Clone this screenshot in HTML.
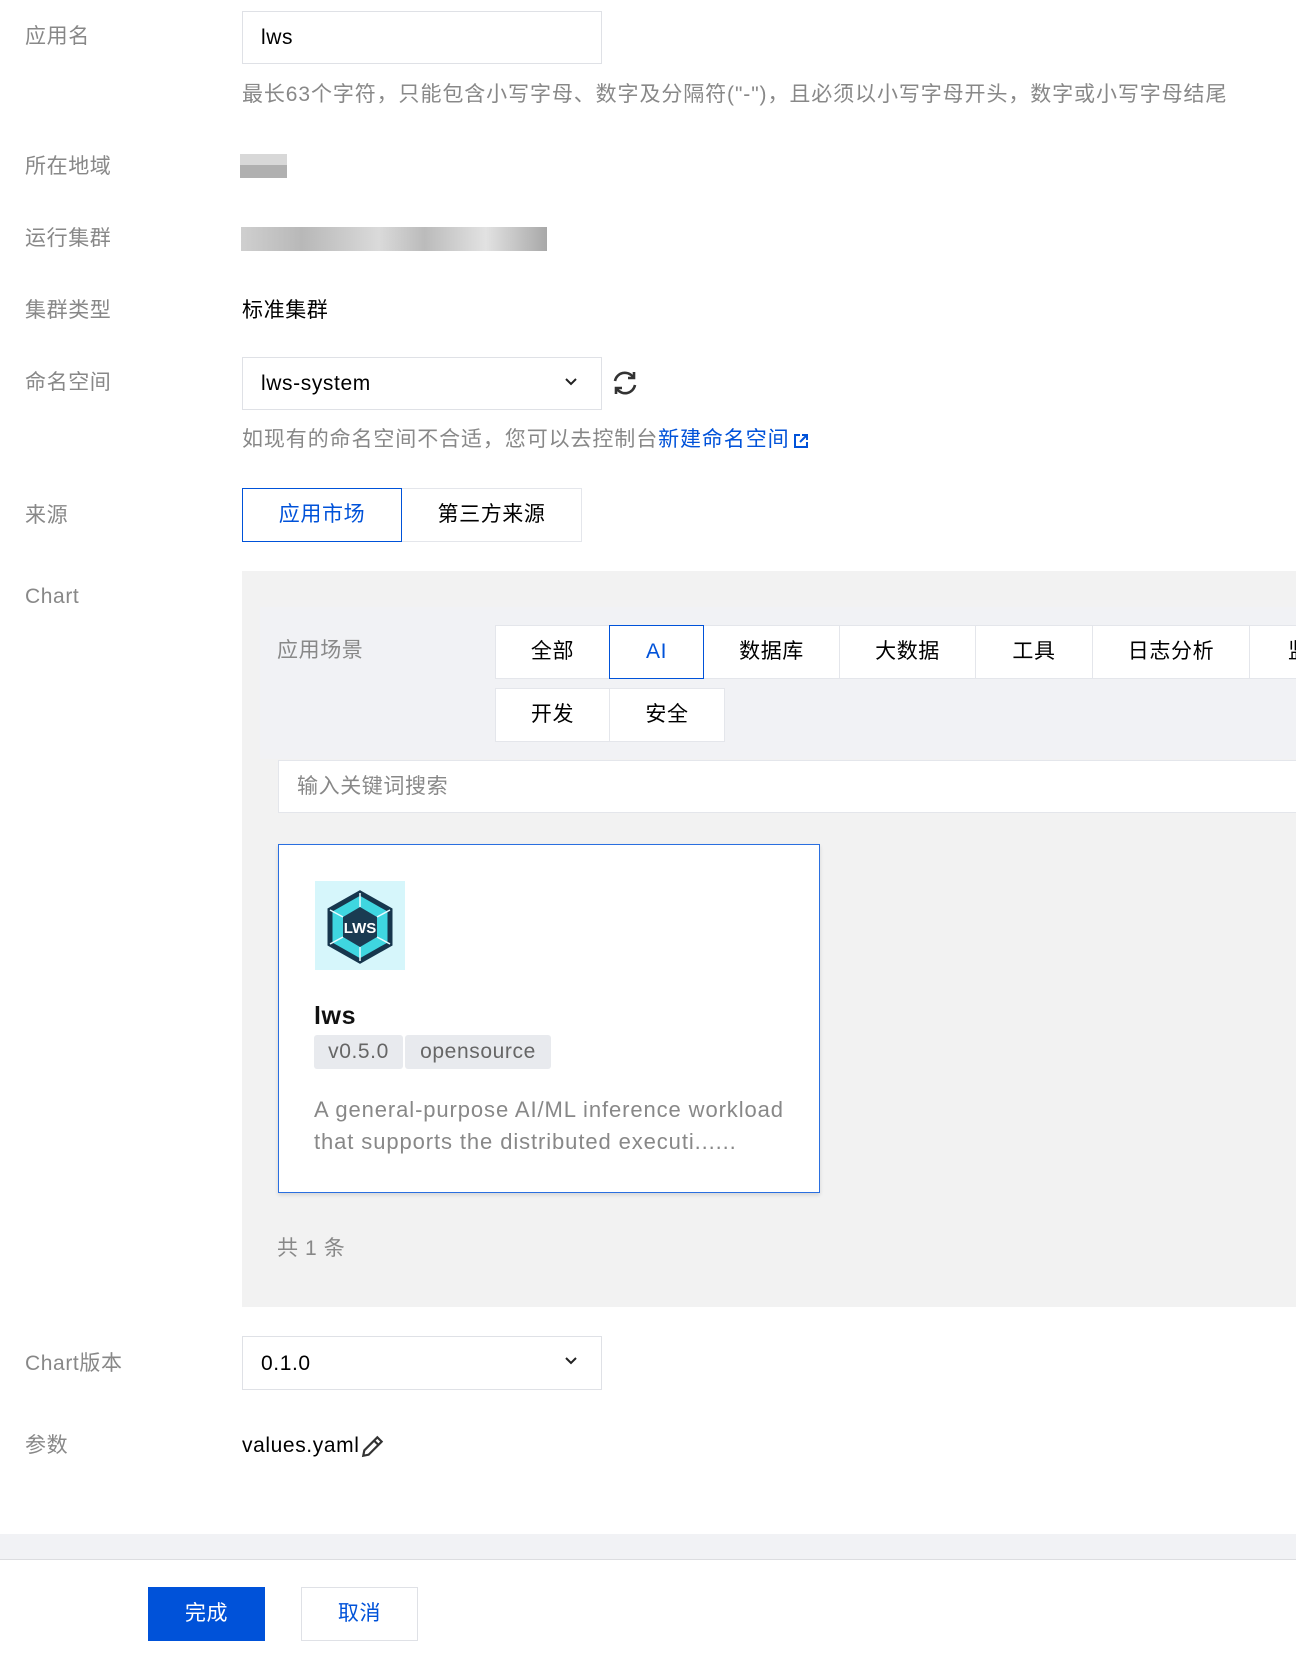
<!DOCTYPE html>
<html><head><meta charset="utf-8"><style>
*{box-sizing:border-box;margin:0;padding:0}
body{width:1296px;height:1660px;background:#fff;font-family:"Liberation Sans","Noto Sans CJK SC",sans-serif;font-size:21px;letter-spacing:0.6px;color:#000;position:relative;overflow:hidden}
.a{position:absolute;white-space:nowrap}
.lbl{color:#888;left:25px;line-height:28px}
.box{position:absolute;border:1px solid #dfe1e6;background:#fff}
.tab{position:absolute;background:#fff;border:1px solid #e4e6eb;text-align:center;line-height:52px}
</style></head><body>
<div class="a lbl" style="top:23px">应用名</div>
<div class="box" style="left:242px;top:11px;width:360px;height:53px"></div>
<div class="a" style="left:261px;top:24px;line-height:28px">lws</div>
<div class="a" style="left:242px;top:81px;color:#888;line-height:28px;letter-spacing:0.9px">最长63个字符，只能包含小写字母、数字及分隔符("-")，且必须以小写字母开头，数字或小写字母结尾</div>

<div class="a lbl" style="top:153px">所在地域</div>
<div class="a" style="left:240px;top:154px;width:47px;height:24px;background:linear-gradient(#d8d8d8 0 45%,#b0b0b0 45%)"></div>
<div class="a lbl" style="top:225px">运行集群</div>
<div class="a" style="left:241px;top:227px;width:306px;height:24px;background:linear-gradient(90deg,#cfcfcf,#b8b8b8 20%,#dadada 45%,#bbb 60%,#e2e2e2 80%,#a8a8a8)"></div>
<div class="a lbl" style="top:297px">集群类型</div>
<div class="a" style="left:242px;top:297px;line-height:28px">标准集群</div>

<div class="a lbl" style="top:369px">命名空间</div>
<div class="box" style="left:242px;top:357px;width:360px;height:53px"></div>
<div class="a" style="left:261px;top:370px;line-height:28px">lws-system</div>
<svg class="a" style="left:563px;top:374px" width="16" height="16" viewBox="0 0 16 16"><path d="M3 5l5 5 5-5" fill="none" stroke="#222" stroke-width="2"/></svg>
<svg class="a" style="left:611px;top:369px" width="28" height="28" viewBox="0 0 28 28" fill="none" stroke="#333" stroke-width="2.6"><path d="M4 12A10 10 0 0 1 22 8"/><path d="M23 3v6h-6"/><path d="M24 16A10 10 0 0 1 6 20"/><path d="M5 25v-6h6"/></svg>
<div class="a" style="left:242px;top:426px;color:#888;line-height:28px;letter-spacing:0.9px">如现有的命名空间不合适，您可以去控制台<span style="color:#0052d9">新建命名空间</span></div>
<svg class="a" style="left:793px;top:433px" width="16" height="16" viewBox="0 0 16 16" fill="none" stroke="#0052d9" stroke-width="2"><path d="M7 2H2v12h12V9"/><path d="M9 2h5v5M14 2L7 9"/></svg>

<div class="a lbl" style="top:502px">来源</div>
<div class="a" style="left:242px;top:488px;width:160px;height:54px;border:1px solid #0052d9;color:#0052d9;text-align:center;line-height:52px">应用市场</div>
<div class="a" style="left:402px;top:488px;width:180px;height:54px;border:1px solid #e4e6eb;border-left:none;text-align:center;line-height:52px">第三方来源</div>

<div class="a lbl" style="top:583px">Chart</div>
<div class="a" style="left:242px;top:571px;width:1054px;height:736px;background:#f2f2f2"></div>
<div class="a" style="left:260px;top:607px;width:1036px;height:152px;background:#f1f2f5"></div>
<div class="a" style="left:277px;top:637px;color:#888;line-height:28px">应用场景</div>
<div class="tab" style="left:495px;top:625px;width:115px;height:54px">全部</div>
<div class="tab" style="left:609px;top:625px;width:95px;height:54px;border-color:#0052d9;color:#0052d9;z-index:2">AI</div>
<div class="tab" style="left:703px;top:625px;width:137px;height:54px">数据库</div>
<div class="tab" style="left:839px;top:625px;width:137px;height:54px">大数据</div>
<div class="tab" style="left:975px;top:625px;width:118px;height:54px">工具</div>
<div class="tab" style="left:1092px;top:625px;width:158px;height:54px">日志分析</div>
<div class="tab" style="left:1249px;top:625px;width:120px;height:54px;text-align:left;padding-left:38px">监控</div>
<div class="tab" style="left:495px;top:688px;width:115px;height:54px">开发</div>
<div class="tab" style="left:609px;top:688px;width:116px;height:54px">安全</div>
<div class="a" style="left:278px;top:760px;width:1020px;height:53px;background:#fff;border:1px solid #e4e6eb"></div>
<div class="a" style="left:297px;top:773px;color:#888;line-height:28px">输入关键词搜索</div>

<div class="a" style="left:278px;top:844px;width:542px;height:349px;background:#fff;border:1.5px solid #2a6fe0;box-shadow:0 2px 4px rgba(0,0,0,.12)"></div>
<div class="a" style="left:315px;top:881px;width:90px;height:89px;background:#d6f6fb"></div>
<svg class="a" style="left:315px;top:881px" width="90" height="89" viewBox="0 0 90 89">
<polygon points="45,12 75,29 75,63 45,80 15,63 15,29" fill="#3fd6e0" stroke="#16364d" stroke-width="5"/>
<polygon points="45,26 62,36 62,56 45,66 28,56 28,36" fill="#1a3b52"/>
<path d="M45,12V26M75,29L62,36M75,63L62,56M45,80V66M15,63L28,56M15,29L28,36" stroke="#e8fbff" stroke-width="1.5"/>
<text x="45" y="52" text-anchor="middle" font-family="Liberation Sans" font-weight="bold" font-size="15" fill="#fff" letter-spacing="0">LWS</text>
</svg>
<div class="a" style="left:314px;top:1001px;font-size:25px;font-weight:bold;color:#111;line-height:30px">lws</div>
<div class="a" style="left:314px;top:1035px;width:89px;height:34px;background:#e8eaee;border-radius:3px;color:#666;text-align:center;line-height:34px">v0.5.0</div>
<div class="a" style="left:405px;top:1035px;width:146px;height:34px;background:#e8eaee;border-radius:3px;color:#666;text-align:center;line-height:34px">opensource</div>
<div class="a" style="left:314px;top:1094px;color:#888;line-height:32px;font-size:22px;letter-spacing:0.9px">A general-purpose AI/ML inference workload<br>that supports the distributed executi......</div>
<div class="a" style="left:277px;top:1235px;color:#888;line-height:28px">共 1 条</div>

<div class="a lbl" style="top:1350px">Chart版本</div>
<div class="box" style="left:242px;top:1336px;width:360px;height:54px"></div>
<div class="a" style="left:261px;top:1350px;line-height:28px">0.1.0</div>
<svg class="a" style="left:563px;top:1353px" width="16" height="16" viewBox="0 0 16 16"><path d="M3 5l5 5 5-5" fill="none" stroke="#222" stroke-width="2"/></svg>
<div class="a lbl" style="top:1432px">参数</div>
<div class="a" style="left:242px;top:1432px;line-height:28px">values.yaml</div>
<svg class="a" style="left:360px;top:1433px" width="26" height="26" viewBox="0 0 24 24" fill="none" stroke="#333" stroke-width="2"><path d="M3 21l1-5L16 4l4 4L8 20z"/><path d="M13 7l4 4"/></svg>

<div class="a" style="left:0;top:1534px;width:1296px;height:26px;background:#f1f2f5;border-bottom:1px solid #dcdde0"></div>
<div class="a" style="left:148px;top:1587px;width:117px;height:54px;background:#0052d9;color:#fff;text-align:center;line-height:54px">完成</div>
<div class="a" style="left:301px;top:1587px;width:117px;height:54px;border:1px solid #dfe1e6;color:#0052d9;text-align:center;line-height:52px">取消</div>
</body></html>
